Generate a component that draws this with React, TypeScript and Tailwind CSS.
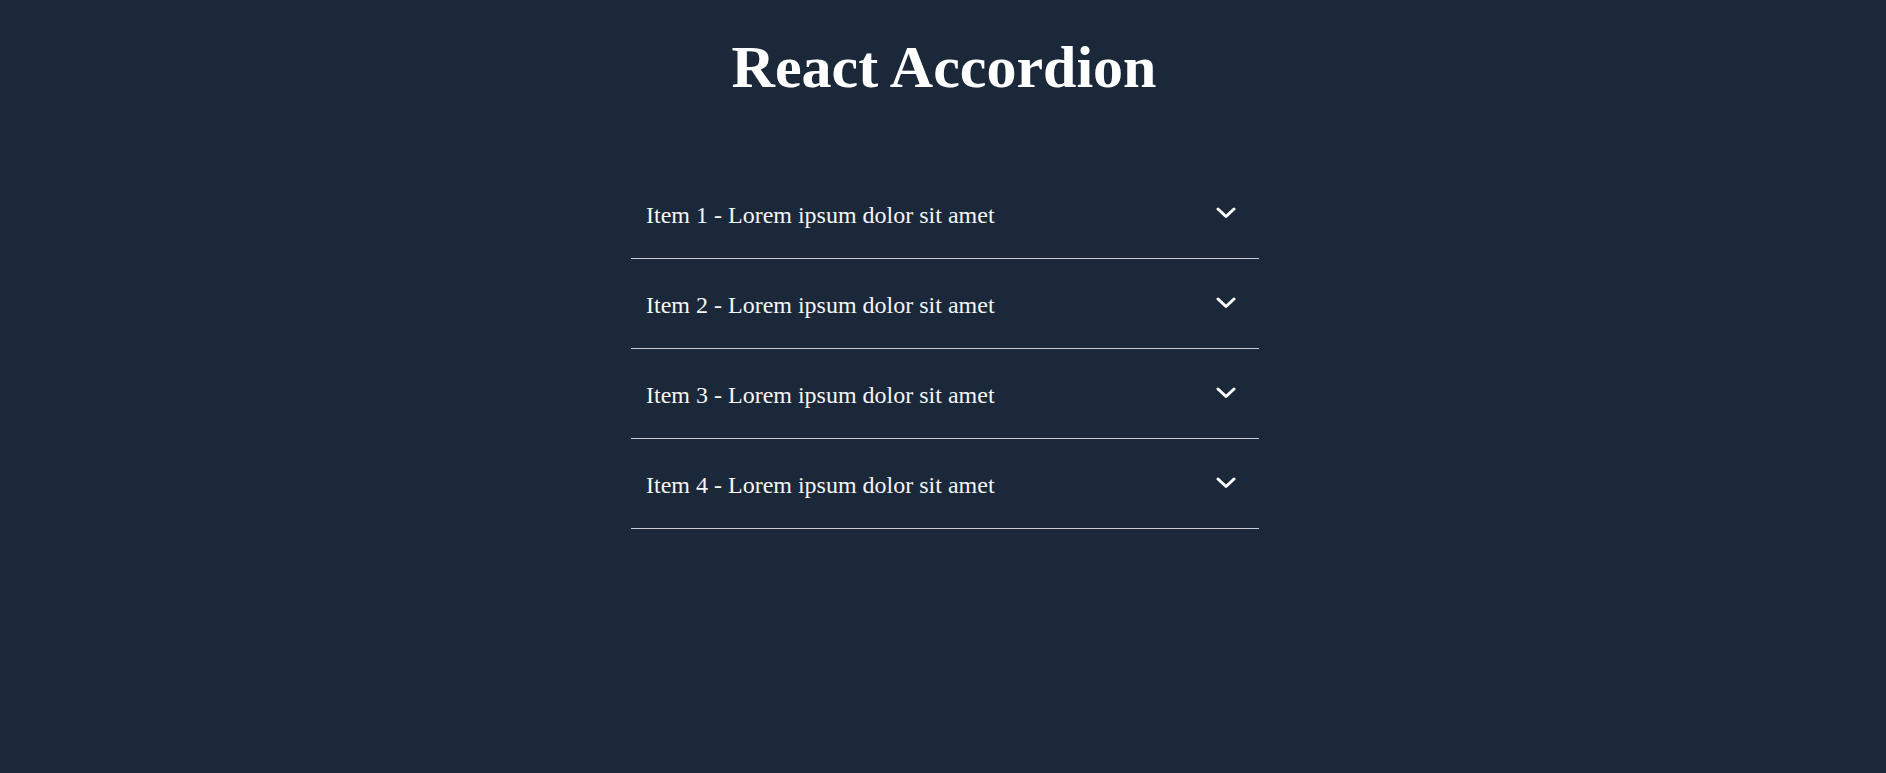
import React, { useState } from "react";

const items = [
  { title: "Item 1 - Lorem ipsum dolor sit amet", body: "Lorem ipsum dolor sit amet, consectetur adipiscing elit." },
  { title: "Item 2 - Lorem ipsum dolor sit amet", body: "Sed do eiusmod tempor incididunt ut labore et dolore magna aliqua." },
  { title: "Item 3 - Lorem ipsum dolor sit amet", body: "Ut enim ad minim veniam, quis nostrud exercitation ullamco." },
  { title: "Item 4 - Lorem ipsum dolor sit amet", body: "Duis aute irure dolor in reprehenderit in voluptate velit esse." },
];

function Chevron({ open }: { open: boolean }) {
  return (
    <svg
      width="20"
      height="12"
      viewBox="0 0 20 12"
      className={open ? "rotate-180 mb-[3px]" : "mb-[3px]"}
      fill="none"
      stroke="white"
      strokeWidth="3"
      strokeLinecap="round"
      strokeLinejoin="round"
    >
      <polyline points="2,2 10,9.5 18,2" />
    </svg>
  );
}

export default function App() {
  const [open, setOpen] = useState<number | null>(null);
  return (
    <div
      className="min-h-[773px] bg-[#1b2839] text-white pt-[37px]"
      style={{ fontFamily: '"Liberation Serif", "Times New Roman", serif' }}
    >
      <h1 className="text-center text-[60px] leading-[60px] font-bold pl-[2px]">React Accordion</h1>
      <div className="w-[632px] pl-1 mx-auto mt-[72px]">
        {items.map((it, i) => (
          <div key={i} className="border-b border-[#c8ccd2]">
            <button
              className="w-full h-[89px] flex items-center justify-between pl-[15px] pr-[23px] pt-[2px] text-left cursor-pointer"
              onClick={() => setOpen(open === i ? null : i)}
            >
              <span className="text-[24px] text-[#f5f5f5]">{it.title}</span>
              <Chevron open={open === i} />
            </button>
            {open === i && <div className="px-4 pb-6 text-[18px]">{it.body}</div>}
          </div>
        ))}
      </div>
    </div>
  );
}
